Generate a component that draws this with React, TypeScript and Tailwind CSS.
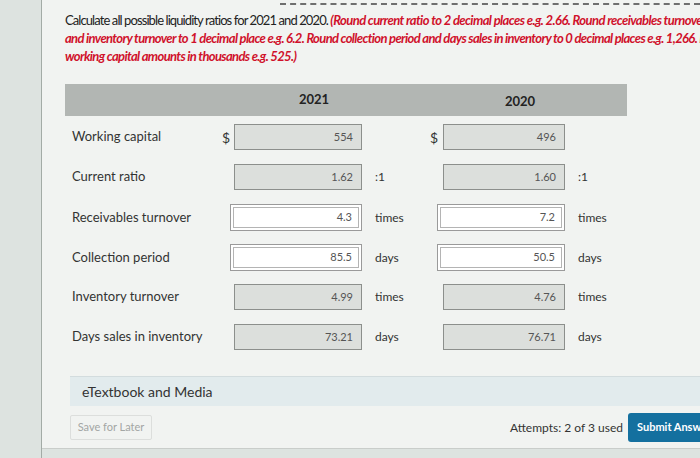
import React from 'react';

type Row = {
  label: string;
  dollar?: boolean;
  unit?: string;
  a: string;
  b: string;
  open?: boolean;
};

const rows: Row[] = [
  { label: 'Working capital', dollar: true, a: '554', b: '496' },
  { label: 'Current ratio', unit: ':1', a: '1.62', b: '1.60' },
  { label: 'Receivables turnover', unit: 'times', a: '4.3', b: '7.2', open: true },
  { label: 'Collection period', unit: 'days', a: '85.5', b: '50.5', open: true },
  { label: 'Inventory turnover', unit: 'times', a: '4.99', b: '4.76' },
  { label: 'Days sales in inventory', unit: 'days', a: '73.21', b: '76.71' },
];

function Field({ value, open, width }: { value: string; open?: boolean; width: string }) {
  if (open) {
    return (
      <div className={`${width} h-[27px] border border-[#9a9a9a] bg-white p-[2px]`}>
        <div className="h-full border border-[#b4b4b4] flex items-center justify-end pr-[6px] text-[11px] text-[#555]">
          {value}
        </div>
      </div>
    );
  }
  return (
    <div
      className={`${width} h-[26px] border border-[#8c8f8c] bg-[#dcdfdc] flex items-center justify-end pr-[8px] text-[11px] text-[#555]`}
    >
      {value}
    </div>
  );
}

export default function App() {
  return (
    <div
      className="w-[700px] h-[458px] overflow-hidden flex bg-[#dde3e0]"
      style={{ fontFamily: 'Lato, "Open Sans", sans-serif' }}
    >
      <div className="w-[42px] shrink-0 border-r border-[#a3aba6]" />

      <div className="flex-1 flex flex-col overflow-hidden">
        <div className="bg-[#f1f3f1] flex flex-col h-[449px] border-b border-[#c9cdca]">
          <div className="h-[5px] ml-[238px] border-b-2 border-dashed border-[#6f6f6f]" />

          <div className="pl-[23px] pt-[6px] text-[13px] leading-[18px] tracking-[-0.07em] text-[#222]">
            <div className="whitespace-nowrap">
              Calculate all possible liquidity ratios for 2021 and 2020.{' '}
              <span className="font-bold italic text-[#d0112b] tracking-[-0.045em]">
                (Round current ratio to 2 decimal places e.g. 2.66. Round receivables turnover
              </span>
            </div>
            <div className="whitespace-nowrap font-bold italic text-[#d0112b] tracking-[-0.05em]">
              and inventory turnover to 1 decimal place e.g. 6.2. Round collection period and days sales in inventory to 0 decimal places e.g. 1,266. Round
            </div>
            <div className="whitespace-nowrap font-bold italic text-[#d0112b] tracking-[-0.05em]">
              working capital amounts in thousands e.g. 525.)
            </div>
          </div>

          <div className="ml-[23px] mt-[19px] w-[562px] h-[32px] bg-[#b2b6b3] grid grid-cols-[157px_12px_128px_68px_13px_122px_1fr] items-center text-[13px] font-bold text-[#222]">
            <div />
            <div />
            <div className="text-center pl-[32px]">2021</div>
            <div />
            <div />
            <div className="text-center pl-[32px] pt-[4px]">2020</div>
            <div />
          </div>

          <div className="ml-[23px] mt-[8px] flex flex-col gap-[14px]">
            {rows.map((r) => (
              <div
                key={r.label}
                className="h-[26px] grid grid-cols-[157px_12px_128px_68px_13px_122px_1fr] items-center text-[13px] text-[#333]"
              >
                <div className="pl-[7px] whitespace-nowrap">{r.label}</div>
                <div className="text-[14px]">{r.dollar ? '$' : ''}</div>
                <div className="flex justify-end">
                  <Field value={r.a} open={r.open} width={r.open ? 'w-[132px] -ml-[4px]' : 'w-[128px]'} />
                </div>
                <div className="pl-[13px] text-[12px]">{r.unit}</div>
                <div className="text-[14px]">{r.dollar ? '$' : ''}</div>
                <div className="flex justify-end">
                  <Field value={r.b} open={r.open} width={r.open ? 'w-[128px] -ml-[6px]' : 'w-[122px]'} />
                </div>
                <div className="pl-[13px] text-[12px]">{r.unit}</div>
              </div>
            ))}
          </div>

          <div className="ml-[28px] mt-[26px] h-[30px] bg-[#e2ebed] border-t border-[#d3dcde] flex items-center pl-[12px] text-[14px] text-[#333]">
            eTextbook and Media
          </div>

          <div className="mt-[7px] flex items-center">
            <div className="ml-[28px] w-[82px] h-[25px] border border-[#dcdedc] rounded-[2px] flex items-center justify-center text-[11px] text-[#a3a6a4]">
              Save for Later
            </div>
            <div className="ml-auto flex items-center">
              <span className="text-[12px] text-[#333] mr-[5px] whitespace-nowrap">Attempts: 2 of 3 used</span>
              <div className="w-[90px] h-[29px] bg-[#14709f] rounded-[3px] flex items-center pl-[9px] text-[11px] font-bold text-white whitespace-nowrap -mr-[18px]">
                Submit Answer
              </div>
            </div>
          </div>
        </div>
      </div>
    </div>
  );
}
